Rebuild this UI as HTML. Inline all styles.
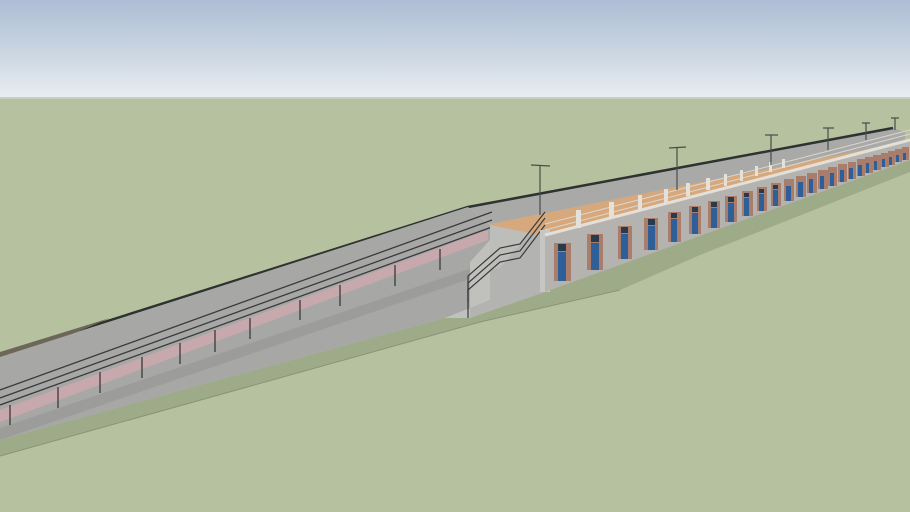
<!DOCTYPE html>
<html><head><meta charset="utf-8"><style>html,body{margin:0;padding:0;width:910px;height:512px;overflow:hidden;background:#b5c19f}</style></head><body>
<svg width="910" height="512" viewBox="0 0 910 512" xmlns="http://www.w3.org/2000/svg">
<defs>
<linearGradient id="sky" x1="0" y1="0" x2="0" y2="1"><stop offset="0" stop-color="#aebdd5"/><stop offset="0.5" stop-color="#c8d4e0"/><stop offset="1" stop-color="#e9edf3"/></linearGradient>
</defs>
<rect x="0" y="0" width="910" height="98" fill="url(#sky)"/>
<rect x="0" y="97" width="910" height="2" fill="#c9d0bd"/>
<rect x="0" y="99" width="910" height="413" fill="#b5c19f"/>
<!-- ground shadow -->
<polygon points="0,440 445,318 545,290 910,160 910,172 700,255 620,290 480,322 0,456" fill="#9eab88"/>
<polyline points="0,456 480,322 620,290" fill="none" stroke="#8a9478" stroke-width="1"/>
<!-- back wall -->
<polygon points="468,207 893,128 905,132 905,142 490,224" fill="#a9aaa8"/>
<polyline points="0,355 468,207 893,128" fill="none" stroke="#2e3230" stroke-width="2.5"/>
<!-- dark top surface at far left -->
<polygon points="0,352 110,318 0,365" fill="#6d675a"/>
<!-- deck -->
<polygon points="490,224 905,142 910,146 545,236 500,232" fill="#d6a87c"/>
<!-- left ramp wall -->
<polygon points="0,357 468,207 490,225 490,300 445,318 0,440" fill="#a7a8a6"/>
<polygon points="0,428 490,262 490,272 0,440" fill="#9c9d9b"/>
<!-- pink ramp -->
<polygon points="0,410 488,230 488,240 0,422" fill="#c7a9ad"/>
<!-- handrails -->
<g stroke="#3a3a3c" stroke-width="1.3" fill="none">
<line x1="0" y1="390" x2="492" y2="212"/>
<line x1="0" y1="398" x2="492" y2="220"/>
<line x1="0" y1="405" x2="492" y2="227"/>
<line x1="10" y1="405" x2="10" y2="425"/><line x1="58" y1="387" x2="58" y2="408"/>
<line x1="100" y1="372" x2="100" y2="393"/><line x1="142" y1="357" x2="142" y2="378"/>
<line x1="180" y1="343" x2="180" y2="364"/><line x1="215" y1="330" x2="215" y2="352"/>
<line x1="250" y1="318" x2="250" y2="339"/><line x1="300" y1="300" x2="300" y2="320"/>
<line x1="340" y1="285" x2="340" y2="306"/><line x1="395" y1="265" x2="395" y2="286"/>
<line x1="440" y1="249" x2="440" y2="270"/>
</g>
<!-- stair block -->
<polygon points="445,318 490,300 490,225 545,236 545,292 470,318" fill="#b3b4b2"/>
<polygon points="445,318 470,318 470,262 490,240 490,300" fill="#c0c0bd"/>
<polygon points="490,225 530,233 500,268 490,270" fill="#bdbdba"/>
<g stroke="#3a3a3c" stroke-width="1.2" fill="none">
<polyline points="468,318 468,290 500,262 520,258 545,225"/>
<polyline points="468,310 468,283 500,255 520,251 545,218"/>
<polyline points="468,302 468,276 500,248 520,244 545,212"/>
</g>
<rect x="540" y="230" width="10" height="62" fill="#c6c6c3"/>
<!-- facade -->
<polygon points="545,235 910,140 910,160 545,292" fill="#b4b3b0"/>
<polyline points="545,235 910,140" stroke="#e4e0d8" stroke-width="3" fill="none"/>
<g id="bays">
<g fill="#a97d6b"><rect x="554" y="243" width="17" height="38"/><rect x="587" y="234" width="16" height="36"/><rect x="618" y="226" width="14" height="33"/><rect x="644" y="218" width="14" height="32"/><rect x="668" y="212" width="13" height="30"/><rect x="689" y="206" width="12" height="28"/><rect x="708" y="201" width="12" height="27"/><rect x="725" y="196" width="12" height="26"/><rect x="742" y="191" width="11" height="25"/><rect x="757" y="187" width="10" height="24"/><rect x="771" y="183" width="10" height="23"/><rect x="784" y="179" width="10" height="22"/><rect x="796" y="176" width="10" height="21"/><rect x="807" y="173" width="10" height="20"/><rect x="818" y="170" width="10" height="19"/><rect x="828" y="167" width="9" height="19"/><rect x="838" y="164" width="9" height="18"/><rect x="848" y="162" width="8" height="17"/><rect x="857" y="159" width="8" height="17"/><rect x="865" y="157" width="8" height="16"/><rect x="873" y="155" width="8" height="15"/><rect x="881" y="153" width="8" height="14"/><rect x="888" y="151" width="7" height="14"/><rect x="895" y="149" width="7" height="13"/><rect x="902" y="147" width="7" height="13"/></g>
<g fill="#2f5f98"><rect x="558" y="252" width="8" height="29"/><rect x="591" y="243" width="8" height="27"/><rect x="621" y="234" width="7" height="25"/><rect x="648" y="226" width="7" height="24"/><rect x="671" y="219" width="6" height="23"/><rect x="692" y="213" width="6" height="21"/><rect x="711" y="208" width="6" height="20"/><rect x="728" y="203" width="6" height="19"/><rect x="744" y="198" width="5" height="18"/><rect x="759" y="194" width="5" height="17"/><rect x="773" y="190" width="5" height="16"/><rect x="786" y="186" width="5" height="15"/><rect x="798" y="182" width="5" height="15"/><rect x="809" y="179" width="4" height="14"/><rect x="820" y="176" width="4" height="13"/><rect x="830" y="173" width="4" height="13"/><rect x="840" y="170" width="4" height="12"/><rect x="849" y="168" width="4" height="11"/><rect x="858" y="165" width="4" height="11"/><rect x="866" y="163" width="3" height="10"/><rect x="874" y="161" width="3" height="9"/><rect x="882" y="159" width="3" height="8"/><rect x="889" y="157" width="3" height="8"/><rect x="896" y="155" width="3" height="7"/><rect x="903" y="153" width="3" height="7"/></g>
<g fill="#2a3a4a"><rect x="558" y="244" width="8" height="7"/><rect x="591" y="235" width="8" height="7"/><rect x="621" y="227" width="7" height="6"/><rect x="648" y="219" width="7" height="6"/><rect x="671" y="213" width="6" height="5"/><rect x="692" y="207" width="6" height="5"/><rect x="711" y="202" width="6" height="5"/><rect x="728" y="197" width="6" height="5"/><rect x="744" y="193" width="5" height="4"/><rect x="759" y="189" width="5" height="4"/><rect x="773" y="185" width="5" height="4"/></g>
</g>
<!-- parapet railing with posts -->
<g stroke="#dcd6cc" stroke-width="1" fill="none">
<line x1="545" y1="230" x2="910" y2="134"/><line x1="545" y1="224" x2="910" y2="130"/>
</g>
<g fill="#e3e1dc"><rect x="576" y="210" width="5" height="18"/><rect x="609" y="202" width="5" height="16"/><rect x="638" y="195" width="4" height="15"/><rect x="664" y="189" width="4" height="14"/><rect x="686" y="183" width="4" height="13"/><rect x="706" y="178" width="4" height="12"/><rect x="724" y="174" width="3" height="12"/><rect x="740" y="170" width="3" height="11"/><rect x="755" y="166" width="3" height="10"/><rect x="769" y="162" width="3" height="10"/><rect x="782" y="159" width="3" height="9"/></g>
<!-- lamp posts -->
<g stroke="#4a4c4c" stroke-width="1.2" fill="none">
<line x1="540" y1="166" x2="540" y2="215"/><line x1="531" y1="165" x2="550" y2="166"/>
<line x1="677" y1="148" x2="677" y2="190"/><line x1="669" y1="148" x2="686" y2="147"/>
<line x1="771" y1="135" x2="771" y2="165"/><line x1="765" y1="135" x2="778" y2="135"/>
<line x1="828" y1="128" x2="828" y2="150"/><line x1="823" y1="128" x2="834" y2="128"/>
<line x1="866" y1="123" x2="866" y2="140"/><line x1="862" y1="123" x2="870" y2="123"/>
<line x1="895" y1="118" x2="895" y2="130"/><line x1="891" y1="118" x2="899" y2="118"/>
</g>
</svg>
</body></html>
